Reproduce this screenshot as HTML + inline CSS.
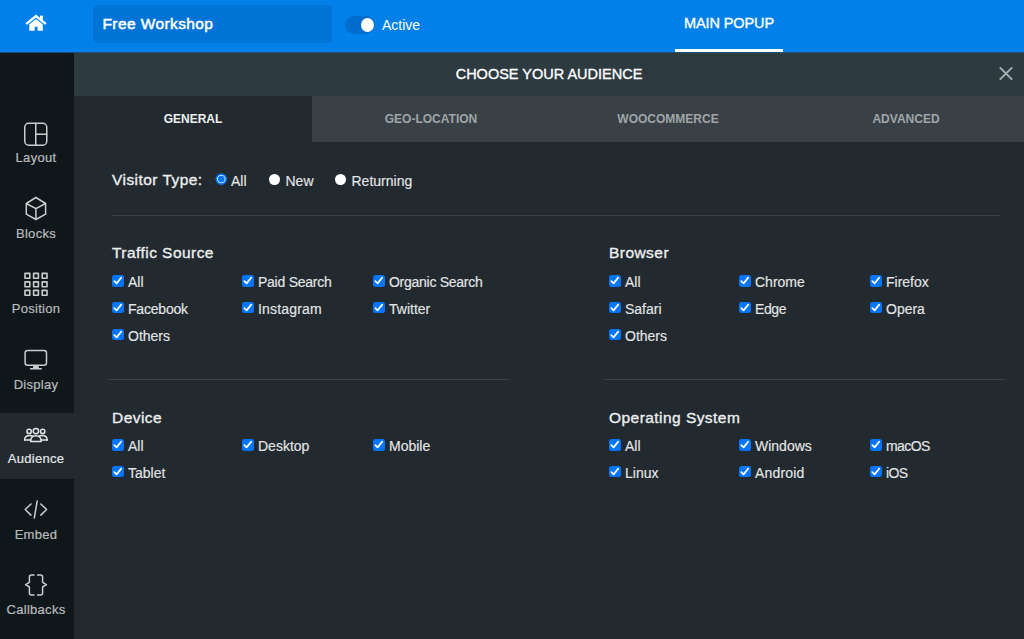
<!DOCTYPE html>
<html><head><meta charset="utf-8">
<style>
*{box-sizing:border-box}
html,body{margin:0;padding:0;width:1024px;height:639px;overflow:hidden;background:#222a2f;font-family:"Liberation Sans",sans-serif}
.abs{position:absolute}
#hdr{left:0;top:0;width:1024px;height:52px;background:#0080e8}
#inp{left:93px;top:5px;width:238.5px;height:38px;background:#0073d6;border-radius:3px}
#inp span{position:absolute;left:9.5px;top:9.5px;color:#fff;font-size:15.5px;line-height:18px;letter-spacing:0.4px;-webkit-text-stroke:0.5px #fff}
#tog{left:345px;top:16px;width:30px;height:18px;border-radius:9px;background:#006ccc}
#knob{left:361px;top:18px;width:13px;height:14px;border-radius:50%;background:#fff}
#active{left:382px;top:16px;color:#fff;font-size:14px;line-height:18px}
#mp{left:684px;top:15px;color:#fff;font-size:14.5px;line-height:17px;letter-spacing:-0.1px;-webkit-text-stroke:0.35px #fff}
#mpline{left:675px;top:49px;width:108px;height:3px;background:#fff}
#side{left:0;top:52px;width:74px;height:587px;background:#10171a}
.sitem{position:absolute;left:0;width:74px;text-align:center;color:#c4c8ca;font-size:13px}
.sitem svg{position:absolute;left:25px;top:0}
.sitem .lb{position:absolute;left:0;width:74px;top:31px;line-height:16px}
#title{left:74px;top:52px;width:950px;height:44px;background:#2d3a3f;color:#fff;font-size:14.5px;text-align:center;line-height:44px;-webkit-text-stroke:0.35px #fff}
#tabs{left:74px;top:96px;width:950px;height:46px;background:#3a4146}
.tab{position:absolute;top:0;width:238px;height:46px;line-height:46px;text-align:center;font-size:12px;font-weight:bold;color:#9fa5a8}
.tab.on{background:#222a2f;color:#eef1f2}
.sep{position:absolute;height:1px;background:#3a4247}
.hd{position:absolute;color:#eceeef;font-size:15.5px;line-height:18px;letter-spacing:0.45px;-webkit-text-stroke:0.35px #eceeef}
.cb{position:absolute;color:#e3e5e6;font-size:14px;line-height:16px;white-space:nowrap}
.cb i{position:absolute;left:0;top:1px;width:11.6px;height:11.6px;background:#0075ff;border-radius:2.5px}
.cb i svg{position:absolute;left:0;top:0}
.cb span{position:absolute;left:16px;top:0;-webkit-text-stroke:0.15px #e3e5e6}
.slb{position:absolute;left:-1px;width:74px;text-align:center;color:#b8bcbe;font-size:13px;line-height:16px;letter-spacing:0.3px;-webkit-text-stroke:0.2px #b8bcbe}
.slb.on{color:#e4e7e8;-webkit-text-stroke:0.2px #e4e7e8}
.rd{position:absolute;width:10.8px;height:10.8px;border-radius:50%;background:#fff}
.rdl{position:absolute;color:#e3e5e6;font-size:14px;line-height:16px;-webkit-text-stroke:0.15px #e3e5e6}
</style></head><body>
<div id="hdr" class="abs"></div>
<svg class="abs" style="left:0;top:0" width="60" height="40" viewBox="0 0 60 40"><path d="M26.9 23.4 L36 16 L45.1 23.4" stroke="#fff" stroke-width="2.3" fill="none" stroke-linecap="round" stroke-linejoin="miter"/><rect x="40" y="15.6" width="2.8" height="5" fill="#fff"/><path d="M29.3 24.3 L36 18.9 L42.8 24.3 V30.8 H37.6 V26.8 H34.7 V30.8 H29.3 Z" fill="#fff"/></svg>
<div id="inp" class="abs"><span>Free Workshop</span></div>
<div id="tog" class="abs"></div><div id="knob" class="abs"></div>
<div id="active" class="abs">Active</div>
<div id="mp" class="abs">MAIN POPUP</div>
<div id="mpline" class="abs"></div>
<div class="abs" style="left:0;top:52px;width:1024px;height:1px;background:#1d4f78;z-index:5"></div>

<div id="side" class="abs"></div>
<div class="abs" style="left:0;top:413px;width:74px;height:66px;background:#222a2f"></div>
<svg class="abs" style="left:0;top:0" width="74" height="639" viewBox="0 0 74 639" fill="none" stroke="#c9cdcf" stroke-width="1.5" stroke-linecap="round" stroke-linejoin="round">
<rect x="24.75" y="123.25" width="22" height="22" rx="4"/>
<path d="M35.75 123.25 V145.25 M35.75 134.25 H46.75"/>
<path d="M35.9 197.5 L45.6 203.5 V214.2 L35.9 219.5 L26.3 214.2 V203.5 Z M26.3 203.5 L35.9 208.6 L45.6 203.5 M35.9 208.6 V219.5"/>
<g stroke-width="1.6">
<rect x="25" y="273.4" width="4.8" height="4.8"/><rect x="33.6" y="273.4" width="4.8" height="4.8"/><rect x="42.2" y="273.4" width="4.8" height="4.8"/>
<rect x="25" y="281.9" width="4.8" height="4.8"/><rect x="33.6" y="281.9" width="4.8" height="4.8"/><rect x="42.2" y="281.9" width="4.8" height="4.8"/>
<rect x="25" y="290.4" width="4.8" height="4.8"/><rect x="33.6" y="290.4" width="4.8" height="4.8"/><rect x="42.2" y="290.4" width="4.8" height="4.8"/>
</g>
<rect x="25.1" y="350.4" width="21.4" height="14.8" rx="2.5"/>
<path d="M33.4 365.4 H38.4 L39 368.2 H32.8 Z" fill="#c9cdcf" stroke="none"/>
<path d="M30.6 368.8 H41.2" stroke-width="1.6"/>
<g stroke="#e2e5e6"><circle cx="29.1" cy="431.4" r="2.2"/><circle cx="42.7" cy="431.4" r="2.2"/><circle cx="35.9" cy="431.1" r="2.7"/>
<path d="M24.6 439.9 C24.6 436.6 27 435.4 30 435.4 C31.2 435.4 32.2 435.7 32.8 436.1"/>
<path d="M47.2 439.9 C47.2 436.6 44.8 435.4 41.8 435.4 C40.6 435.4 39.6 435.7 39 436.1"/>
<path d="M30.6 441.6 C30.6 437.6 32.6 435.8 35.9 435.8 C39.2 435.8 41.2 437.6 41.2 441.6 Z"/>
<path d="M24.6 439.9 H30.6 M41.2 439.9 H47.2"/></g>
<path d="M31 504 L25.2 509.5 L31 515.1 M40.8 504 L46.6 509.5 L40.8 515.1 M37.2 501 L34.3 517.9"/>
<path d="M34 574.9 H31.4 Q29.4 574.9 29.4 576.9 V582.4 L25.6 584.7 L29.4 587 V592.9 Q29.4 594.9 31.4 594.9 H34"/>
<path d="M37.6 574.9 H40.6 Q42.6 574.9 42.6 576.9 V582.4 L46.4 584.7 L42.6 587 V592.9 Q42.6 594.9 40.6 594.9 H37.6"/>
</svg>
<div class="slb" style="top:150px">Layout</div>
<div class="slb" style="top:226px">Blocks</div>
<div class="slb" style="top:301px">Position</div>
<div class="slb" style="top:377px">Display</div>
<div class="slb on" style="top:451px">Audience</div>
<div class="slb" style="top:527px">Embed</div>
<div class="slb" style="top:602px">Callbacks</div>


<div id="title" class="abs">CHOOSE YOUR AUDIENCE</div>
<svg class="abs" style="left:998px;top:66px" width="16" height="16" viewBox="0 0 16 16"><path d="M1.8 1.4 L14.2 13.6 M14.2 1.4 L1.8 13.6" stroke="#a7b0b3" stroke-width="2"/></svg>
<div id="tabs" class="abs">
<div class="tab on" style="left:0">GENERAL</div>
<div class="tab" style="left:238px">GEO-LOCATION</div>
<div class="tab" style="left:475px">WOOCOMMERCE</div>
<div class="tab" style="left:713px">ADVANCED</div>
</div>

<div class="hd" style="left:112px;top:171px">Visitor Type:</div>
<svg class="abs" style="left:210px;top:170px" width="24" height="20" viewBox="0 0 24 20"><circle cx="11.3" cy="9.1" r="5" fill="#fff" stroke="#0075ff" stroke-width="1.6"/><circle cx="11.3" cy="9.1" r="3.35" fill="#0075ff"/></svg>
<div class="rdl" style="left:231px;top:173px">All</div>
<div class="rd" style="left:269.1px;top:174.2px"></div>
<div class="rdl" style="left:285.5px;top:173px">New</div>
<div class="rd" style="left:335.4px;top:174.2px"></div>
<div class="rdl" style="left:351.5px;top:173px">Returning</div>
<div class="sep" style="left:112px;top:215px;width:888px"></div>
<div class="hd" style="left:112px;top:244px">Traffic Source</div>
<div class="hd" style="left:609px;top:244px">Browser</div>
<div class="sep" style="left:107.5px;top:379px;width:401.5px"></div>
<div class="sep" style="left:604px;top:379px;width:401px"></div>
<div class="hd" style="left:112px;top:409px">Device</div>
<div class="hd" style="left:609px;top:409px">Operating System</div>
<div class="cb" style="left:112px;top:274px"><i><svg width="12" height="12" viewBox="0 0 12 12"><path d="M2.3 6.2 L4.6 8.4 L9.2 2.6" fill="none" stroke="#fff" stroke-width="1.7" stroke-linecap="round" stroke-linejoin="round"/></svg></i><span>All</span></div>
<div class="cb" style="left:242px;top:274px"><i><svg width="12" height="12" viewBox="0 0 12 12"><path d="M2.3 6.2 L4.6 8.4 L9.2 2.6" fill="none" stroke="#fff" stroke-width="1.7" stroke-linecap="round" stroke-linejoin="round"/></svg></i><span style="letter-spacing:-0.25px">Paid Search</span></div>
<div class="cb" style="left:373px;top:274px"><i><svg width="12" height="12" viewBox="0 0 12 12"><path d="M2.3 6.2 L4.6 8.4 L9.2 2.6" fill="none" stroke="#fff" stroke-width="1.7" stroke-linecap="round" stroke-linejoin="round"/></svg></i><span style="letter-spacing:-0.27px">Organic Search</span></div>
<div class="cb" style="left:112px;top:300.8px"><i><svg width="12" height="12" viewBox="0 0 12 12"><path d="M2.3 6.2 L4.6 8.4 L9.2 2.6" fill="none" stroke="#fff" stroke-width="1.7" stroke-linecap="round" stroke-linejoin="round"/></svg></i><span style="letter-spacing:-0.2px">Facebook</span></div>
<div class="cb" style="left:242px;top:300.8px"><i><svg width="12" height="12" viewBox="0 0 12 12"><path d="M2.3 6.2 L4.6 8.4 L9.2 2.6" fill="none" stroke="#fff" stroke-width="1.7" stroke-linecap="round" stroke-linejoin="round"/></svg></i><span style="letter-spacing:0.17px">Instagram</span></div>
<div class="cb" style="left:373px;top:300.8px"><i><svg width="12" height="12" viewBox="0 0 12 12"><path d="M2.3 6.2 L4.6 8.4 L9.2 2.6" fill="none" stroke="#fff" stroke-width="1.7" stroke-linecap="round" stroke-linejoin="round"/></svg></i><span>Twitter</span></div>
<div class="cb" style="left:112px;top:327.5px"><i><svg width="12" height="12" viewBox="0 0 12 12"><path d="M2.3 6.2 L4.6 8.4 L9.2 2.6" fill="none" stroke="#fff" stroke-width="1.7" stroke-linecap="round" stroke-linejoin="round"/></svg></i><span>Others</span></div>
<div class="cb" style="left:609px;top:274px"><i><svg width="12" height="12" viewBox="0 0 12 12"><path d="M2.3 6.2 L4.6 8.4 L9.2 2.6" fill="none" stroke="#fff" stroke-width="1.7" stroke-linecap="round" stroke-linejoin="round"/></svg></i><span>All</span></div>
<div class="cb" style="left:739px;top:274px"><i><svg width="12" height="12" viewBox="0 0 12 12"><path d="M2.3 6.2 L4.6 8.4 L9.2 2.6" fill="none" stroke="#fff" stroke-width="1.7" stroke-linecap="round" stroke-linejoin="round"/></svg></i><span>Chrome</span></div>
<div class="cb" style="left:870px;top:274px"><i><svg width="12" height="12" viewBox="0 0 12 12"><path d="M2.3 6.2 L4.6 8.4 L9.2 2.6" fill="none" stroke="#fff" stroke-width="1.7" stroke-linecap="round" stroke-linejoin="round"/></svg></i><span>Firefox</span></div>
<div class="cb" style="left:609px;top:300.8px"><i><svg width="12" height="12" viewBox="0 0 12 12"><path d="M2.3 6.2 L4.6 8.4 L9.2 2.6" fill="none" stroke="#fff" stroke-width="1.7" stroke-linecap="round" stroke-linejoin="round"/></svg></i><span>Safari</span></div>
<div class="cb" style="left:739px;top:300.8px"><i><svg width="12" height="12" viewBox="0 0 12 12"><path d="M2.3 6.2 L4.6 8.4 L9.2 2.6" fill="none" stroke="#fff" stroke-width="1.7" stroke-linecap="round" stroke-linejoin="round"/></svg></i><span style="letter-spacing:-0.4px">Edge</span></div>
<div class="cb" style="left:870px;top:300.8px"><i><svg width="12" height="12" viewBox="0 0 12 12"><path d="M2.3 6.2 L4.6 8.4 L9.2 2.6" fill="none" stroke="#fff" stroke-width="1.7" stroke-linecap="round" stroke-linejoin="round"/></svg></i><span>Opera</span></div>
<div class="cb" style="left:609px;top:327.5px"><i><svg width="12" height="12" viewBox="0 0 12 12"><path d="M2.3 6.2 L4.6 8.4 L9.2 2.6" fill="none" stroke="#fff" stroke-width="1.7" stroke-linecap="round" stroke-linejoin="round"/></svg></i><span>Others</span></div>
<div class="cb" style="left:112px;top:438px"><i><svg width="12" height="12" viewBox="0 0 12 12"><path d="M2.3 6.2 L4.6 8.4 L9.2 2.6" fill="none" stroke="#fff" stroke-width="1.7" stroke-linecap="round" stroke-linejoin="round"/></svg></i><span>All</span></div>
<div class="cb" style="left:242px;top:438px"><i><svg width="12" height="12" viewBox="0 0 12 12"><path d="M2.3 6.2 L4.6 8.4 L9.2 2.6" fill="none" stroke="#fff" stroke-width="1.7" stroke-linecap="round" stroke-linejoin="round"/></svg></i><span>Desktop</span></div>
<div class="cb" style="left:373px;top:438px"><i><svg width="12" height="12" viewBox="0 0 12 12"><path d="M2.3 6.2 L4.6 8.4 L9.2 2.6" fill="none" stroke="#fff" stroke-width="1.7" stroke-linecap="round" stroke-linejoin="round"/></svg></i><span>Mobile</span></div>
<div class="cb" style="left:112px;top:464.7px"><i><svg width="12" height="12" viewBox="0 0 12 12"><path d="M2.3 6.2 L4.6 8.4 L9.2 2.6" fill="none" stroke="#fff" stroke-width="1.7" stroke-linecap="round" stroke-linejoin="round"/></svg></i><span>Tablet</span></div>
<div class="cb" style="left:609px;top:438px"><i><svg width="12" height="12" viewBox="0 0 12 12"><path d="M2.3 6.2 L4.6 8.4 L9.2 2.6" fill="none" stroke="#fff" stroke-width="1.7" stroke-linecap="round" stroke-linejoin="round"/></svg></i><span>All</span></div>
<div class="cb" style="left:739px;top:438px"><i><svg width="12" height="12" viewBox="0 0 12 12"><path d="M2.3 6.2 L4.6 8.4 L9.2 2.6" fill="none" stroke="#fff" stroke-width="1.7" stroke-linecap="round" stroke-linejoin="round"/></svg></i><span>Windows</span></div>
<div class="cb" style="left:870px;top:438px"><i><svg width="12" height="12" viewBox="0 0 12 12"><path d="M2.3 6.2 L4.6 8.4 L9.2 2.6" fill="none" stroke="#fff" stroke-width="1.7" stroke-linecap="round" stroke-linejoin="round"/></svg></i><span style="letter-spacing:-0.6px">macOS</span></div>
<div class="cb" style="left:609px;top:464.7px"><i><svg width="12" height="12" viewBox="0 0 12 12"><path d="M2.3 6.2 L4.6 8.4 L9.2 2.6" fill="none" stroke="#fff" stroke-width="1.7" stroke-linecap="round" stroke-linejoin="round"/></svg></i><span>Linux</span></div>
<div class="cb" style="left:739px;top:464.7px"><i><svg width="12" height="12" viewBox="0 0 12 12"><path d="M2.3 6.2 L4.6 8.4 L9.2 2.6" fill="none" stroke="#fff" stroke-width="1.7" stroke-linecap="round" stroke-linejoin="round"/></svg></i><span style="letter-spacing:0.18px">Android</span></div>
<div class="cb" style="left:870px;top:464.7px"><i><svg width="12" height="12" viewBox="0 0 12 12"><path d="M2.3 6.2 L4.6 8.4 L9.2 2.6" fill="none" stroke="#fff" stroke-width="1.7" stroke-linecap="round" stroke-linejoin="round"/></svg></i><span style="letter-spacing:-0.6px">iOS</span></div>
</body></html>
